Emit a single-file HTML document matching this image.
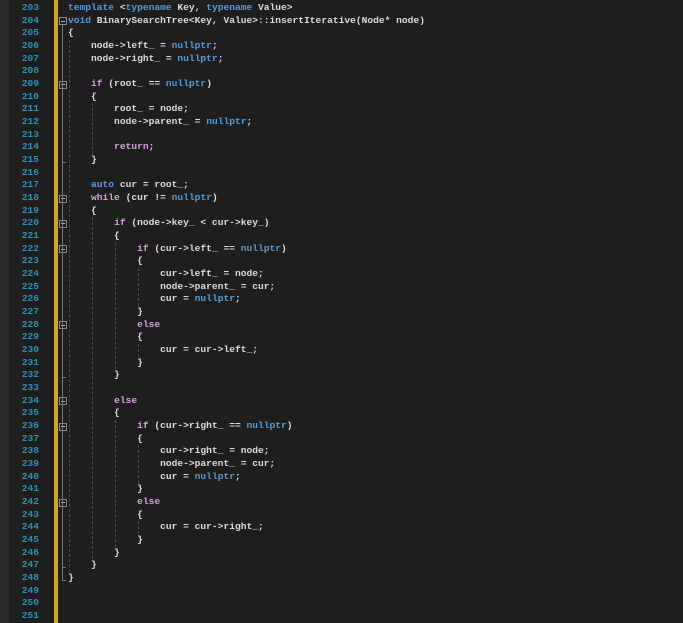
<!DOCTYPE html>
<html><head><meta charset="utf-8"><style>
html,body{margin:0;padding:0;width:683px;height:623px;overflow:hidden;background:#1e1e1e;}
.strip{position:absolute;left:0;top:0;width:9px;height:623px;background:#2a2a2c;}
.ybar{position:absolute;left:54px;top:0;width:4px;height:623px;background:#c9a925;}
.ln{position:absolute;left:10px;width:29px;text-align:right;color:#2b91af;}
.cd{position:absolute;left:68px;white-space:pre;color:#dcdcdc;}
.ln,.cd{font-family:"Liberation Mono",monospace;font-size:9.6px;line-height:12.67px;height:12.67px;font-weight:bold;}
.k{color:#569cd6}.c{color:#d8a0df}
.g{position:absolute;width:0;border-left:1px dashed #4a4a4a;}
.fb{position:absolute;left:59px;width:6px;height:6px;border:1px solid #8a8a8a;background:#1e1e1e;}
.fb:after{content:"";position:absolute;left:1px;top:2.5px;width:4px;height:1px;background:#bbb;}
.ol{position:absolute;left:62px;width:1px;background:#777;}
.tk{position:absolute;left:62px;width:4px;height:1px;background:#777;}
</style></head><body>
<div class="strip"></div>
<div class="ybar"></div>
<div id="w"></div>
<script>
var L=[
['<span class="k">template</span> &lt;<span class="k">typename</span> Key, <span class="k">typename</span> Value&gt;'],
['<span class="k">void</span> BinarySearchTree&lt;Key, Value&gt;::insertIterative(Node* node)',1],
['{'],
['    node-&gt;left_ = <span class="k">nullptr</span>;'],
['    node-&gt;right_ = <span class="k">nullptr</span>;'],
[''],
['    <span class="c">if</span> (root_ == <span class="k">nullptr</span>)',1],
['    {'],
['        root_ = node;'],
['        node-&gt;parent_ = <span class="k">nullptr</span>;'],
[''],
['        <span class="c">return</span>;'],
['    }'],
[''],
['    <span class="k">auto</span> cur = root_;'],
['    <span class="c">while</span> (cur != <span class="k">nullptr</span>)',1],
['    {'],
['        <span class="c">if</span> (node-&gt;key_ &lt; cur-&gt;key_)',1],
['        {'],
['            <span class="c">if</span> (cur-&gt;left_ == <span class="k">nullptr</span>)',1],
['            {'],
['                cur-&gt;left_ = node;'],
['                node-&gt;parent_ = cur;'],
['                cur = <span class="k">nullptr</span>;'],
['            }'],
['            <span class="c">else</span>',1],
['            {'],
['                cur = cur-&gt;left_;'],
['            }'],
['        }'],
[''],
['        <span class="c">else</span>',1],
['        {'],
['            <span class="c">if</span> (cur-&gt;right_ == <span class="k">nullptr</span>)',1],
['            {'],
['                cur-&gt;right_ = node;'],
['                node-&gt;parent_ = cur;'],
['                cur = <span class="k">nullptr</span>;'],
['            }'],
['            <span class="c">else</span>',1],
['            {'],
['                cur = cur-&gt;right_;'],
['            }'],
['        }'],
['    }'],
['}'],
[''],[''],['']
];
var H=12.67,T=2,h='';
function y(n){return T+(n-203)*H;}
for(var i=0;i<L.length;i++){var n=203+i,t=y(n);
h+='<div class="ln" style="top:'+t+'px">'+n+'</div><div class="cd" style="top:'+t+'px">'+L[i][0]+'</div>';
if(L[i][1])h+='<div class="fb" style="top:'+(t+2.5)+'px"></div>';}
h+='<div class="ol" style="top:'+(y(204)+10)+'px;height:'+(y(248)+8-y(204)-10)+'px"></div>';
[215,232,247,248].forEach(function(n){h+='<div class="tk" style="top:'+(y(n)+8)+'px"></div>';});
var G=[[0,206,247],[4,211,214],[4,220,246],[8,222,231],[12,224,226],[12,230,230],[8,236,245],[12,238,240],[12,244,244]];
G.forEach(function(g){var x=69+g[0]*5.76;h+='<div class="g" style="left:'+x+'px;top:'+y(g[1])+'px;height:'+((g[2]-g[1]+1)*H)+'px"></div>';});
document.getElementById('w').innerHTML=h;
</script>
</body></html>
